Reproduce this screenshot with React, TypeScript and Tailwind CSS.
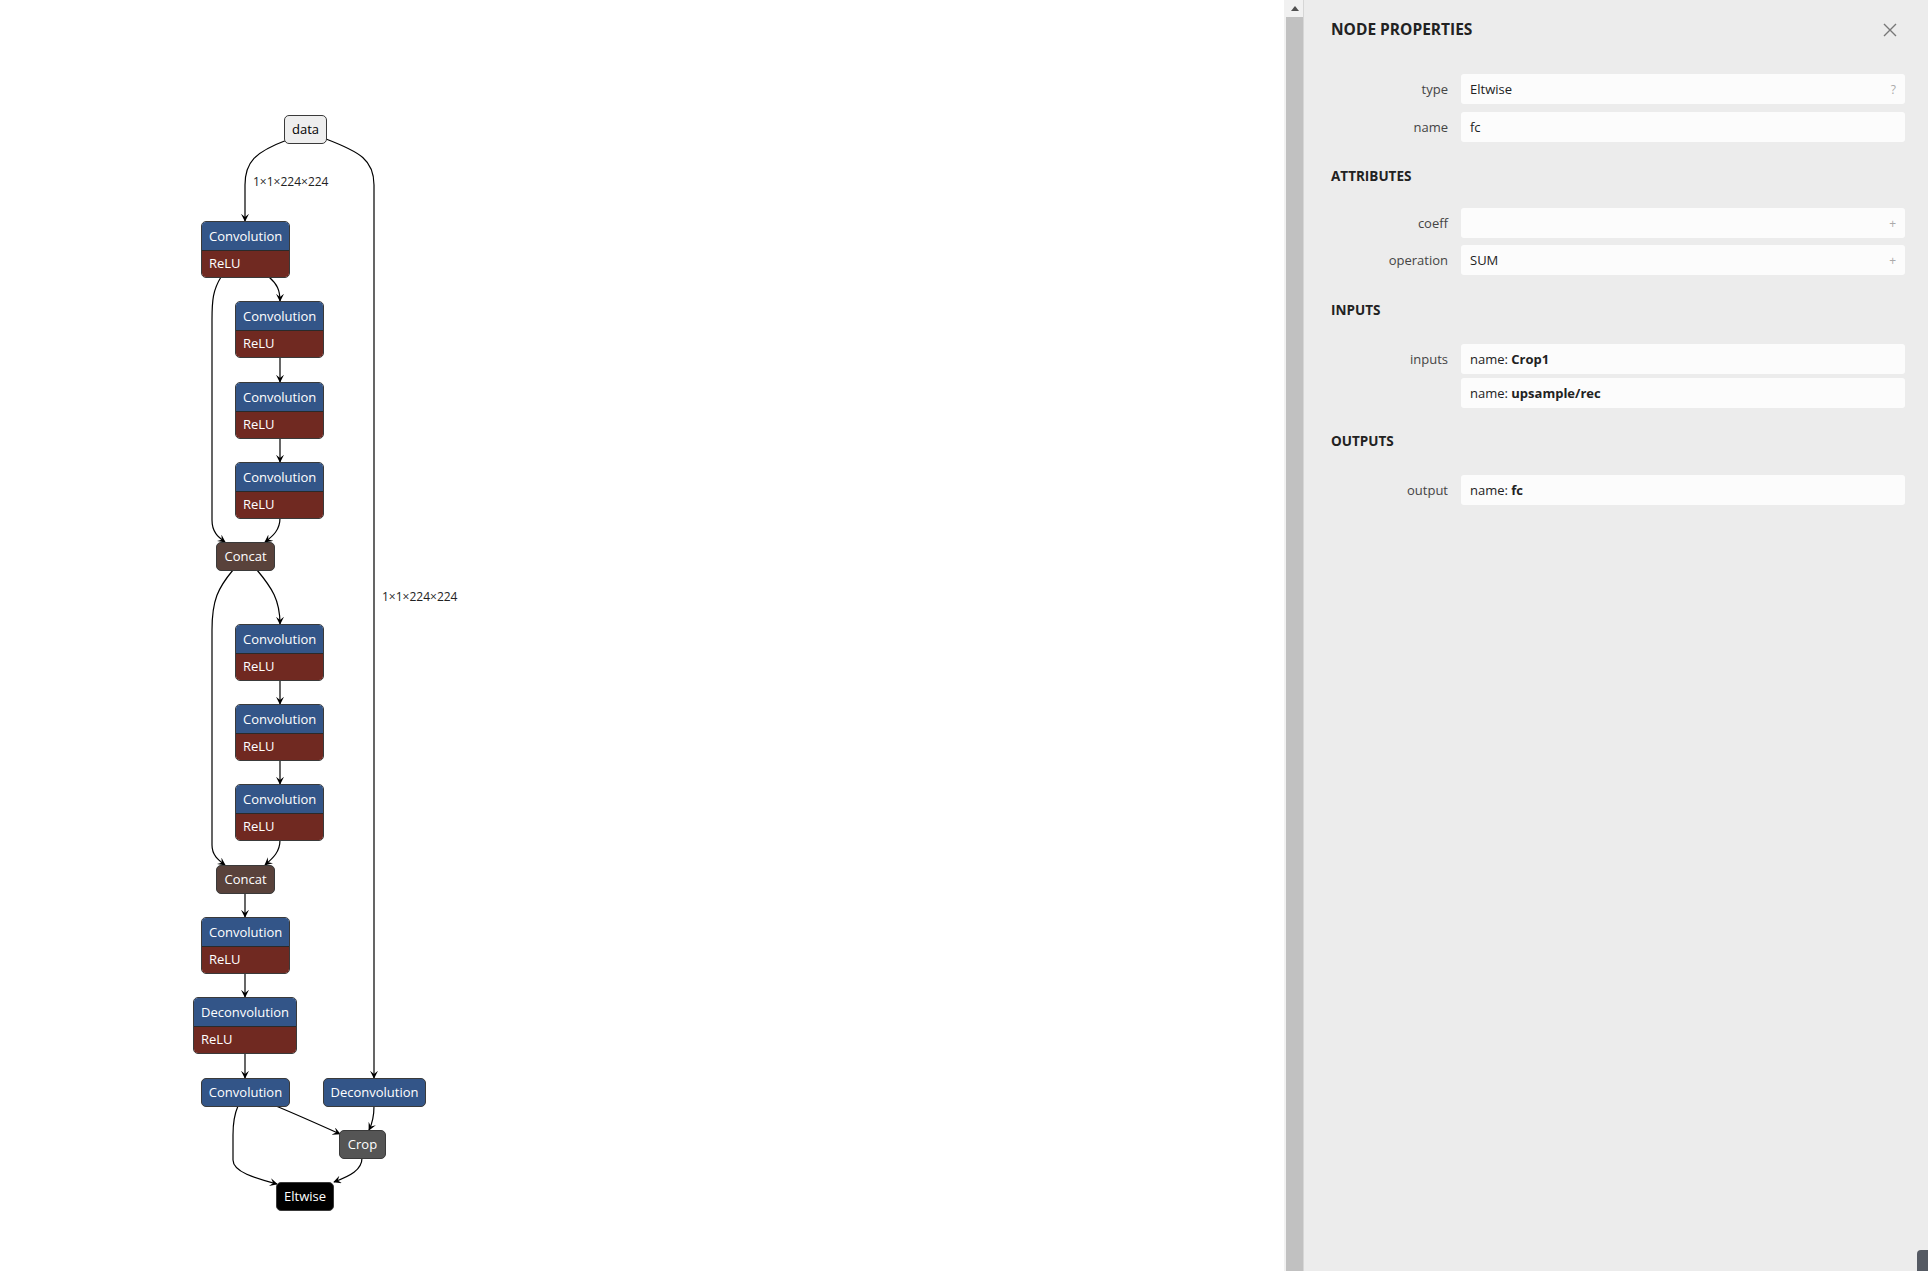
import React from "react";

type GraphNode = {
  x: number;
  y: number;
  w: number;
  label: string;
  act?: string;
  kind: "layer" | "input" | "tensor" | "data" | "plain";
};

const nodes: GraphNode[] = [
  { x: 284, y: 115, w: 43, label: "data", kind: "input" },
  { x: 201, y: 221, w: 89, label: "Convolution", act: "ReLU", kind: "layer" },
  { x: 235, y: 301, w: 89, label: "Convolution", act: "ReLU", kind: "layer" },
  { x: 235, y: 382, w: 89, label: "Convolution", act: "ReLU", kind: "layer" },
  { x: 235, y: 462, w: 89, label: "Convolution", act: "ReLU", kind: "layer" },
  { x: 216, y: 542, w: 59, label: "Concat", kind: "tensor" },
  { x: 235, y: 624, w: 89, label: "Convolution", act: "ReLU", kind: "layer" },
  { x: 235, y: 704, w: 89, label: "Convolution", act: "ReLU", kind: "layer" },
  { x: 235, y: 784, w: 89, label: "Convolution", act: "ReLU", kind: "layer" },
  { x: 216, y: 865, w: 59, label: "Concat", kind: "tensor" },
  { x: 201, y: 917, w: 89, label: "Convolution", act: "ReLU", kind: "layer" },
  { x: 193, y: 997, w: 104, label: "Deconvolution", act: "ReLU", kind: "layer" },
  { x: 201, y: 1078, w: 89, label: "Convolution", kind: "layer" },
  { x: 323, y: 1078, w: 103, label: "Deconvolution", kind: "layer" },
  { x: 339, y: 1130, w: 47, label: "Crop", kind: "data" },
  { x: 276, y: 1182, w: 58, label: "Eltwise", kind: "plain" },
];

const edges = [
  "M 287 140 C 255 152, 245 162, 245 185 L 245 221",
  "M 326 139 C 360 152, 374 160, 374 185 L 374 1078",
  "M 269 277 C 277 284, 280 290, 280 301",
  "M 221 277 C 213 290, 212 300, 212 320 L 212 520 C 212 532, 218 537, 225 542",
  "M 280 358 L 280 382",
  "M 280 438 L 280 462",
  "M 280 518 C 280 530, 273 536, 265 542",
  "M 257 570 C 272 588, 280 600, 280 624",
  "M 233 570 C 218 588, 212 600, 212 630 L 212 845 C 212 855, 218 860, 225 865",
  "M 280 680 L 280 704",
  "M 280 760 L 280 784",
  "M 280 840 C 280 852, 273 858, 265 865",
  "M 245 893 L 245 917",
  "M 245 973 L 245 997",
  "M 245 1053 L 245 1078",
  "M 238 1106 C 234 1115, 233 1122, 233 1135 L 233 1160 C 233 1172, 255 1178, 277 1184",
  "M 276 1106 C 300 1116, 320 1125, 340 1134",
  "M 374 1106 C 374 1118, 372 1124, 369 1130",
  "M 362 1158 C 362 1170, 350 1176, 334 1182",
];

const singleFill: Record<string, string> = {
  layer: "bg-[#335588] text-white",
  input: "bg-[#eeeeee] text-black",
  tensor: "bg-[#59423b] text-white",
  data: "bg-[#555555] text-white",
  plain: "bg-black text-white",
};

function Node({ n }: { n: GraphNode }) {
  if (n.act) {
    return (
      <div
        className="absolute flex flex-col overflow-hidden rounded-[5px] border border-[#3a3a3a] text-[13px] text-white"
        style={{ left: n.x, top: n.y, width: n.w, height: 57 }}
      >
        <div className="flex h-[29px] items-center border-b border-[#2a2a2a] bg-[#335588] px-[7px] pt-[1px]">{n.label}</div>
        <div className="flex flex-1 items-center bg-[#702921] px-[7px]">{n.act}</div>
      </div>
    );
  }
  return (
    <div
      className={`absolute flex items-center justify-center rounded-[5px] border border-[#3a3a3a] pt-[1px] text-[13px] ${singleFill[n.kind]}`}
      style={{ left: n.x, top: n.y, width: n.w, height: 29 }}
    >
      {n.label}
    </div>
  );
}

function Graph() {
  return (
    <div className="relative flex-1 bg-white">
      <svg className="absolute inset-0 h-full w-full" xmlns="http://www.w3.org/2000/svg">
        <defs>
          <marker
            id="arrow"
            viewBox="0 0 10 10"
            refX="9"
            refY="5"
            markerWidth="8"
            markerHeight="8"
            markerUnits="userSpaceOnUse"
            orient="auto"
          >
            <path d="M0,0 L10,5 L0,10 L4,5 z" fill="#000" />
          </marker>
        </defs>
        {edges.map((d, i) => (
          <path key={i} d={d} fill="none" stroke="#000" strokeWidth="1.2" markerEnd="url(#arrow)" />
        ))}
      </svg>
      <div className="absolute left-[253px] top-[174px] text-[12px] leading-[16px] text-[#222]">1×1×224×224</div>
      <div className="absolute left-[382px] top-[589px] text-[12px] leading-[16px] text-[#222]">1×1×224×224</div>
      {nodes.map((n, i) => (
        <Node key={i} n={n} />
      ))}
    </div>
  );
}

function Row({
  label,
  children,
  icon,
  className = "",
}: {
  label?: string;
  children?: React.ReactNode;
  icon?: string;
  className?: string;
}) {
  return (
    <div className={`flex items-start ${className}`}>
      <div className="w-[117px] shrink-0 pt-[6px] text-right text-[13px] leading-[18px] text-[#444]">{label}</div>
      <div className="ml-[13px] flex h-[30px] flex-1 items-center justify-between rounded-[3px] bg-[#fcfcfc] px-[9px] pt-[1px] text-[13px] text-[#222]">
        <span>{children}</span>
        {icon && <span className="text-[12px] text-[#aaa]">{icon}</span>}
      </div>
    </div>
  );
}

function Header({ title, className = "" }: { title: string; className?: string }) {
  return (
    <div className={`flex h-[20px] items-center text-[13.5px] font-bold text-[#222] ${className}`}>{title}</div>
  );
}

function Sidebar() {
  return (
    <aside className="relative w-[625px] shrink-0 border-l border-[#d6d6d6] bg-[#ececec] pl-[27px] pr-[23px]">
      <div className="mt-[20px] flex h-[20px] items-center justify-between">
        <span className="text-[15.5px] font-bold text-[#222]">NODE PROPERTIES</span>
        <svg className="mr-[8px]" width="14" height="14" viewBox="0 0 14 14">
          <path d="M1 1 L13 13 M13 1 L1 13" stroke="#777" strokeWidth="1.4" fill="none" />
        </svg>
      </div>

      <Row label="type" icon="?" className="mt-[34px]">Eltwise</Row>
      <Row label="name" className="mt-[8px]">fc</Row>

      <Header title="ATTRIBUTES" className="mt-[24px]" />
      <Row label="coeff" icon="+" className="mt-[22px]" />
      <Row label="operation" icon="+" className="mt-[7px]">SUM</Row>

      <Header title="INPUTS" className="mt-[25px]" />
      <Row label="inputs" className="mt-[24px]">
        name: <b>Crop1</b>
      </Row>
      <Row className="mt-[4px]">
        name: <b>upsample/rec</b>
      </Row>

      <Header title="OUTPUTS" className="mt-[23px]" />
      <Row label="output" className="mt-[24px]">
        name: <b>fc</b>
      </Row>

      <div className="absolute bottom-0 right-0 h-[21px] w-[11px] rounded-tl-[4px] bg-[#555a63]" />
    </aside>
  );
}

export default function App() {
  return (
    <div className="flex h-[1271px] w-[1928px] overflow-hidden bg-white font-['Open_Sans','Noto_Sans',sans-serif]">
      <Graph />
      <div className="flex w-[19px] shrink-0 flex-col bg-[#f1f1f1] pl-[2px]">
        <div className="flex h-[17px] items-center justify-center">
          <div className="h-0 w-0 border-x-[4px] border-b-[5px] border-x-transparent border-b-[#505050]" />
        </div>
        <div className="flex-1 bg-[#c1c1c1]" />
      </div>
      <Sidebar />
    </div>
  );
}
